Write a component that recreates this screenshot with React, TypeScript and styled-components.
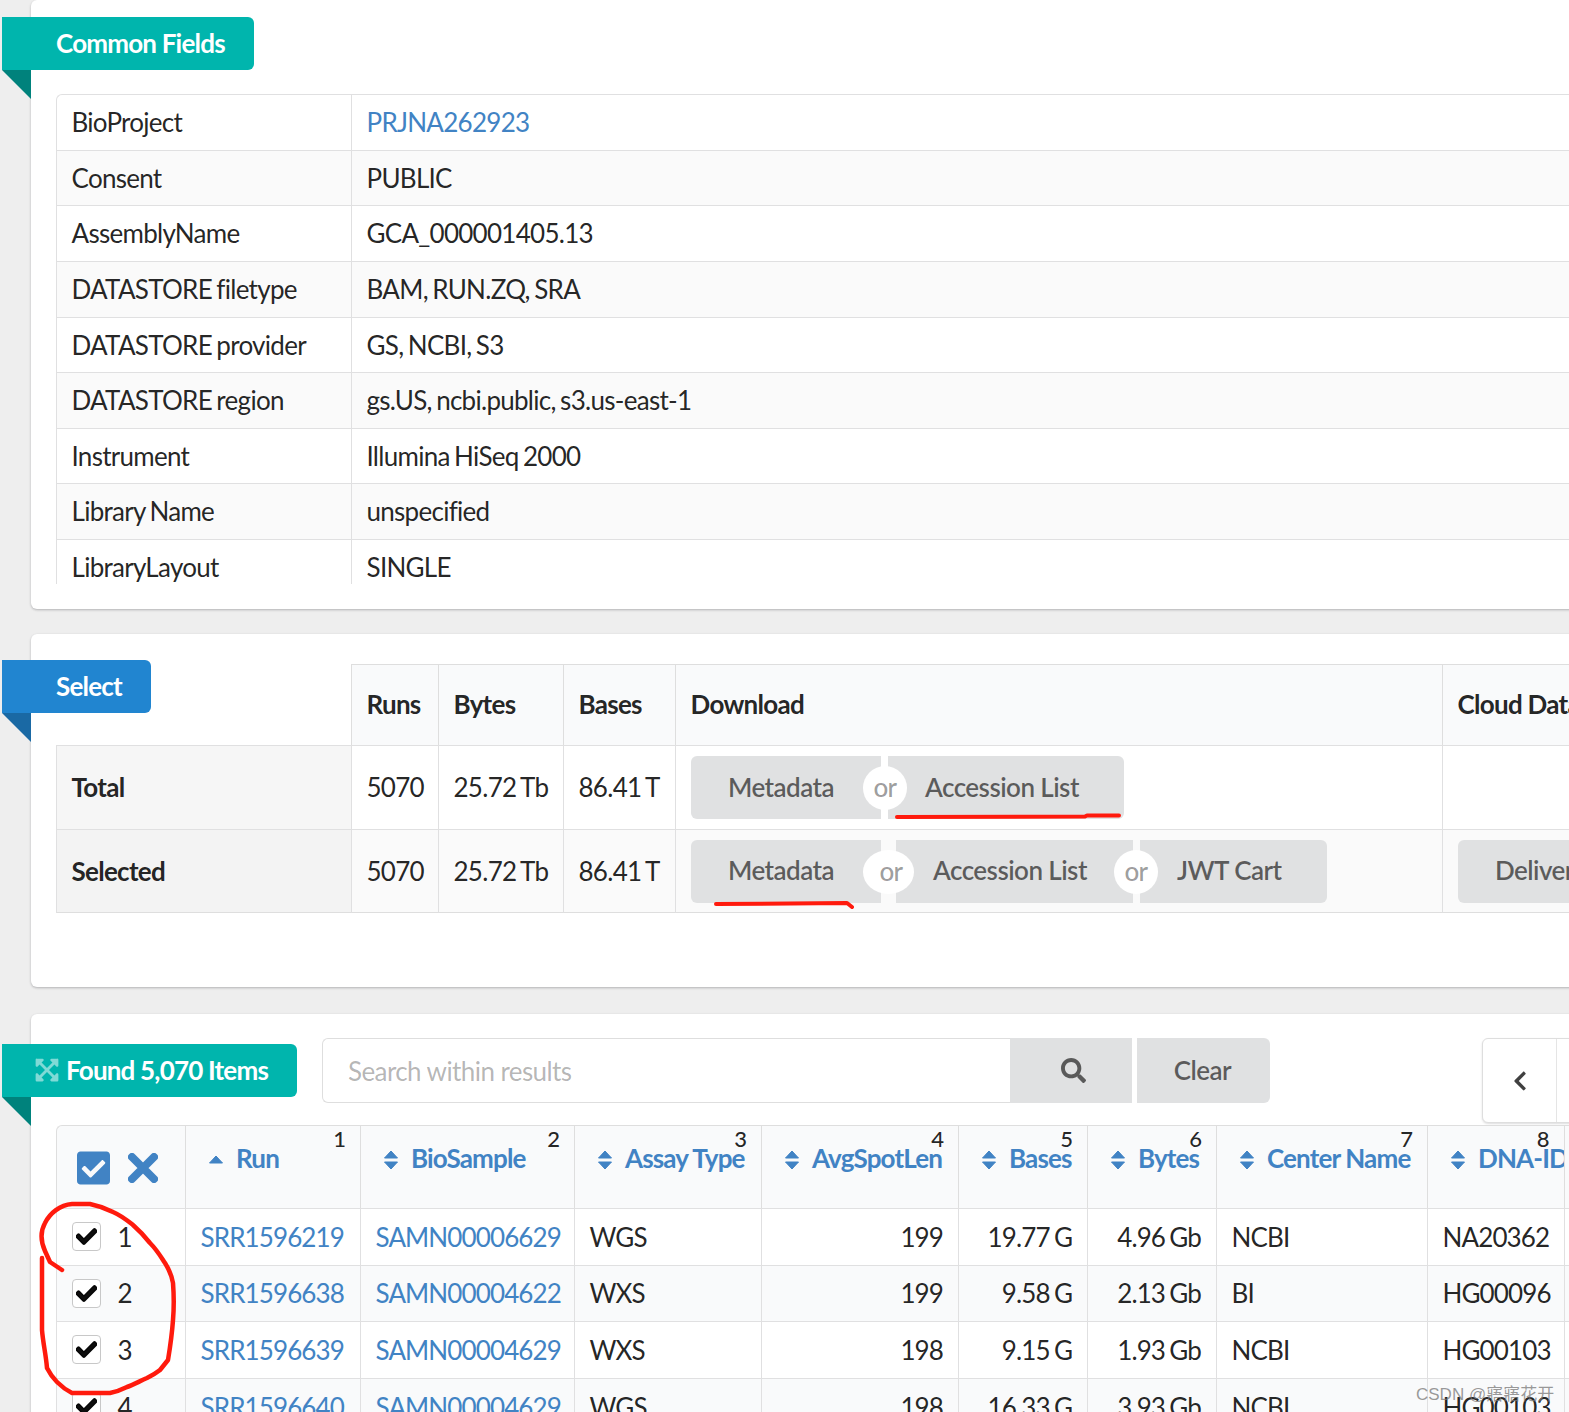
import React from "react";
import styled, { createGlobalStyle } from "styled-components";
import { FaCheck, FaCheckSquare, FaChevronLeft, FaExpandArrowsAlt, FaSearch } from "react-icons/fa";

const Global = createGlobalStyle`
  html, body { margin: 0; padding: 0; overflow: hidden; background: #eeeeee; }
  * { box-sizing: border-box; }
`;

const Page = styled.div`
  position: relative;
  width: 1569px;
  height: 1412px;
  overflow: hidden;
  padding-left: 31px;
  background: #eeeeee;
  font-family: Lato, "Noto Sans CJK SC", sans-serif;
  font-size: 26px;
  letter-spacing: -0.72px;
  word-spacing: -1.5px;
  color: rgba(0, 0, 0, 0.87);
`;

const Card = styled.section<{ $height: number; $top: number; $gap: number }>`
  position: relative;
  width: 1700px;
  height: ${(p) => p.$height}px;
  margin-bottom: ${(p) => p.$gap}px;
  padding: ${(p) => p.$top}px 0 0 25px;
  background: #fff;
  border-radius: 6px;
  box-shadow: 0 1px 2px 0 rgba(34, 36, 38, 0.15), 0 1px 3px 0 rgba(34, 36, 38, 0.15);
`;

const Ribbon = styled.div<{ $bg: string; $fold: string; $top: number; $pad?: number }>`
  position: absolute;
  z-index: 2;
  left: -29px;
  top: ${(p) => p.$top}px;
  height: 53px;
  display: flex;
  align-items: center;
  gap: 6px;
  padding: 0 29px 2px ${(p) => p.$pad ?? 54}px;
  background: ${(p) => p.$bg};
  color: #fff;
  font-weight: 700;
  letter-spacing: -0.8px;
  word-spacing: 0;
  border-radius: 0 6px 6px 0;
  &::after {
    content: "";
    position: absolute;
    left: 0;
    top: 53px;
    border-style: solid;
    border-width: 0 29px 29px 0;
    border-color: transparent ${(p) => p.$fold} transparent transparent;
  }
  svg { color: rgba(255, 255, 255, 0.5); font-size: 26px; }
`;

const ClipBox = styled.div`
  height: 490px;
  overflow: hidden;
`;

const Table = styled.table`
  width: 1644px;
  table-layout: fixed;
  border-collapse: separate;
  border-spacing: 0;
`;

const Row = styled.tr<{ $h: number }>`
  height: ${(p) => p.$h}px;
`;

const Cell = styled.td<{ $bg?: string; $right?: boolean; $bold?: boolean }>`
  padding: 0 15px 1px 14.5px;
  border-top: 1px solid #e0e0e1;
  border-left: 1px solid #e0e0e1;
  background: ${(p) => p.$bg ?? "transparent"};
  text-align: ${(p) => (p.$right ? "right" : "left")};
  font-weight: ${(p) => (p.$bold ? 700 : 400)};
  white-space: nowrap;
  overflow: hidden;
`;

const FieldTable = styled(Table)`
  tr:first-child td:first-child { border-top-left-radius: 6px; }
`;

const RunTable = styled(Table)`
  margin-top: 2px;
  td { letter-spacing: -0.88px; }
`;

const HeadCell = styled.th<{ $empty?: boolean }>`
  padding: 0 15px 2px 14.5px;
  text-align: left;
  font-weight: 700;
  word-spacing: 0;
  white-space: nowrap;
  overflow: hidden;
  ${(p) =>
    p.$empty
      ? ""
      : `background: #f9fafb; border-top: 1px solid #dedede; border-left: 1px solid #dedede;`}
`;

const SelectBottom = styled(Table)`
  tr:last-child td { border-bottom: 1px solid #dedede; }
`;

const BtnRow = styled.div`
  display: flex;
  gap: 7px;
  margin: 1px 0 0 0.5px;
`;

const Btn = styled.div<{ $w: number; $gapL?: number; $l?: boolean; $r?: boolean }>`
  position: relative;
  width: ${(p) => p.$w}px;
  height: 63px;
  margin-left: ${(p) => p.$gapL ?? 0}px;
  padding: 0 0 2px 37px;
  display: flex;
  align-items: center;
  background: #e0e1e2;
  color: rgba(0, 0, 0, 0.6);
  font-weight: 600;
  letter-spacing: -0.55px;
  word-spacing: 0;
  border-radius: ${(p) => (p.$l ? "6px" : "0")} ${(p) => (p.$r ? "6px" : "0")} ${(p) => (p.$r ? "6px" : "0")} ${(p) => (p.$l ? "6px" : "0")};
`;

const Or = styled.span<{ $w: number; $left?: number; $shift?: number }>`
  position: absolute;
  z-index: 1;
  left: ${(p) => p.$left ?? 172}px;
  top: 10px;
  width: ${(p) => p.$w}px;
  height: 44px;
  display: flex;
  align-items: center;
  justify-content: center;
  padding: 0 0 2px ${(p) => p.$shift ?? 0}px;
  background: #fff;
  border-radius: 50%;
  font-weight: 500;
  color: rgba(0, 0, 0, 0.4);
`;

const Toolbar = styled.div`
  display: flex;
  align-items: flex-start;
  height: 85px;
  margin-left: 266px;
`;

const Input = styled.div`
  width: 688px;
  height: 65px;
  display: flex;
  align-items: center;
  padding-left: 25px;
  border: 1px solid #dedede;
  border-right: 0;
  border-radius: 6px 0 0 6px;
  color: rgba(0, 0, 0, 0.3);
  letter-spacing: -0.58px;
  word-spacing: 0;
`;

const SearchBtn = styled.div`
  width: 122px;
  height: 65px;
  padding-left: 4px;
  display: flex;
  align-items: center;
  justify-content: center;
  background: #e0e1e2;
  color: rgba(0, 0, 0, 0.6);
  font-size: 25px;
`;

const ClearBtn = styled.div`
  width: 133px;
  height: 65px;
  margin-left: 5px;
  padding: 0 2px 2px 0;
  display: flex;
  align-items: center;
  justify-content: center;
  background: #e0e1e2;
  color: rgba(0, 0, 0, 0.6);
  font-weight: 600;
  letter-spacing: -0.55px;
  border-radius: 0 6px 6px 0;
`;

const Pager = styled.div`
  display: flex;
  height: 85px;
  margin-left: 212px;
  width: 200px;
  background: #fff;
  border: 1px solid #dedede;
  border-radius: 6px;
  box-shadow: 0 1px 2px 0 rgba(34, 36, 38, 0.15);
`;

const PagerCell = styled.div`
  width: 74px;
  display: flex;
  align-items: center;
  justify-content: center;
  border-right: 1px solid #e5e5e5;
  font-size: 22px;
  color: rgba(0, 0, 0, 0.75);
`;

const SortHead = styled.th`
  position: relative;
  padding: 16px 0 0 23px;
  vertical-align: top;
  background: #f9fafb;
  border-top: 1px solid #dedede;
  border-left: 1px solid #dedede;
  text-align: left;
  font-weight: 700;
  letter-spacing: -0.85px;
  word-spacing: 0;
  white-space: nowrap;
  color: #4183c4;
`;

const SortGlyph = styled.svg`
  width: 14px;
  height: 20px;
  margin-right: 13px;
  vertical-align: -2px;
  fill: #4183c4;
  stroke: #4183c4;
  stroke-width: 1;
  stroke-linejoin: round;
`;

const Badge = styled.span`
  position: absolute;
  top: -1px;
  right: 14px;
  font-size: 22px;
  font-weight: 500;
  letter-spacing: 0;
  color: rgba(0, 0, 0, 0.87);
`;

const CheckHead = styled.th`
  padding: 0 0 0 20px;
  background: #f9fafb;
  border-top: 1px solid #dedede;
  border-left: 1px solid #dedede;
  border-top-left-radius: 6px;
  color: #4183c4;
  text-align: left;
`;

const HeadIcons = styled.div`
  display: flex;
  align-items: center;
  gap: 18px;
  padding-top: 2px;
  > svg:first-child { font-size: 38px; width: 33px; }
`;

const CrossIcon = styled.svg`
  width: 30px;
  height: 30px;
  stroke: #4183c4;
  stroke-width: 8;
  stroke-linecap: round;
  fill: none;
`;

const RowCheck = styled.div`
  display: flex;
  align-items: center;
  gap: 16.5px;
  margin-left: 0.5px;
`;

const Box = styled.span`
  width: 29px;
  height: 29px;
  display: flex;
  align-items: center;
  justify-content: center;
  background: #fff;
  border: 1px solid #c8c8c8;
  border-radius: 4px;
  font-size: 21px;
  color: rgba(0, 0, 0, 0.95);
  svg { stroke: currentColor; stroke-width: 30; }
`;

const A = styled.a`
  color: #4183c4;
`;

const Ink = styled.svg`
  position: absolute;
  z-index: 5;
  left: 0;
  top: 0;
  pointer-events: none;
`;

const Watermark = styled.span`
  position: absolute;
  z-index: 6;
  left: 1416px;
  top: 1380px;
  font-family: "Liberation Sans", "Noto Sans CJK SC", sans-serif;
  font-size: 17px;
  letter-spacing: 0;
  word-spacing: 0;
  color: rgba(120, 120, 120, 0.75);
`;

const fields: [string, string][] = [
  ["BioProject", "PRJNA262923"],
  ["Consent", "PUBLIC"],
  ["AssemblyName", "GCA_000001405.13"],
  ["DATASTORE filetype", "BAM, RUN.ZQ, SRA"],
  ["DATASTORE provider", "GS, NCBI, S3"],
  ["DATASTORE region", "gs.US, ncbi.public, s3.us-east-1"],
  ["Instrument", "Illumina HiSeq 2000"],
  ["Library Name", "unspecified"],
  ["LibraryLayout", "SINGLE"],
];
const fieldHeights = [56, 55, 56, 56, 55, 56, 55, 56, 56];

const heads = ["Run", "BioSample", "Assay Type", "AvgSpotLen", "Bases", "Bytes", "Center Name", "DNA-ID"];
const runCols = [129, 175, 214, 187, 197, 129, 129, 211];
const rows = [
  ["SRR1596219", "SAMN00006629", "WGS", "199", "19.77 G", "4.96 Gb", "NCBI", "NA20362"],
  ["SRR1596638", "SAMN00004622", "WXS", "199", "9.58 G", "2.13 Gb", "BI", "HG00096"],
  ["SRR1596639", "SAMN00004629", "WXS", "198", "9.15 G", "1.93 Gb", "NCBI", "HG00103"],
  ["SRR1596640", "SAMN00004629", "WGS", "198", "16.33 G", "3.93 Gb", "NCBI", "HG00103"],
];
const rowHeights = [57, 56, 57, 57];

function SortIcon({ up }: { up: boolean }) {
  return (
    <SortGlyph viewBox="0 0 14 20">
      {up ? <path d="M7 6 L13.5 13 H0.5 Z" /> : <path d="M7 1 L13.5 8 H0.5 Z M0.5 12 H13.5 L7 19 Z" />}
    </SortGlyph>
  );
}

export default function App() {
  return (
    <Page>
      <Global />
      <Card $height={609} $top={94} $gap={25}>
        <Ribbon $bg="#00b5ad" $fold="#00827c" $top={17}>Common Fields</Ribbon>
        <ClipBox>
          <FieldTable>
            <colgroup><col width={295} /><col /></colgroup>
            <tbody>
              {fields.map(([k, v], i) => (
                <Row key={k} $h={fieldHeights[i]}>
                  <Cell $bg={i % 2 ? "#fafafa" : undefined}>{k}</Cell>
                  <Cell $bg={i % 2 ? "#fafafa" : undefined}>{i === 0 ? <A>{v}</A> : v}</Cell>
                </Row>
              ))}
            </tbody>
          </FieldTable>
        </ClipBox>
      </Card>

      <Card $height={353} $top={30} $gap={27}>
        <Ribbon $bg="#2185d0" $fold="#1a69a4" $top={26}>Select</Ribbon>
        <SelectBottom>
          <colgroup>
            <col width={295} /><col width={87} /><col width={125} /><col width={112} /><col width={767} /><col />
          </colgroup>
          <thead>
            <Row $h={81}>
              <HeadCell $empty />
              <HeadCell>Runs</HeadCell>
              <HeadCell>Bytes</HeadCell>
              <HeadCell>Bases</HeadCell>
              <HeadCell>Download</HeadCell>
              <HeadCell>Cloud Data Delivery</HeadCell>
            </Row>
          </thead>
          <tbody>
            <Row $h={84}>
              <Cell $bg="#f6f6f6" $bold>Total</Cell>
              <Cell>5070</Cell>
              <Cell>25.72 Tb</Cell>
              <Cell>86.41 T</Cell>
              <Cell>
                <BtnRow>
                  <Btn $w={190} $l>Metadata<Or $w={44}>or</Or></Btn>
                  <Btn $w={236} $r>Accession List</Btn>
                </BtnRow>
              </Cell>
              <Cell />
            </Row>
            <Row $h={84}>
              <Cell $bg="#f3f3f3" $bold>Selected</Cell>
              <Cell $bg="#fafafa">5070</Cell>
              <Cell $bg="#fafafa">25.72 Tb</Cell>
              <Cell $bg="#fafafa">86.41 T</Cell>
              <Cell $bg="#fafafa">
                <BtnRow>
                  <Btn $w={190} $l>Metadata<Or $w={51} $shift={5}>or</Or></Btn>
                  <Btn $w={237} $gapL={8}>Accession List<Or $w={44} $left={218}>or</Or></Btn>
                  <Btn $w={187} $r>JWT Cart</Btn>
                </BtnRow>
              </Cell>
              <Cell $bg="#fafafa"><BtnRow><Btn $w={200} $l>Delivery</Btn></BtnRow></Cell>
            </Row>
          </tbody>
        </SelectBottom>
      </Card>

      <Card $height={500} $top={24} $gap={0}>
        <Ribbon $bg="#00b5ad" $fold="#00827c" $top={30} $pad={32}><FaExpandArrowsAlt />Found 5,070 Items</Ribbon>
        <Toolbar>
          <Input>Search within results</Input>
          <SearchBtn><FaSearch /></SearchBtn>
          <ClearBtn>Clear</ClearBtn>
          <Pager>
            <PagerCell><FaChevronLeft /></PagerCell>
          </Pager>
        </Toolbar>
        <RunTable>
          <colgroup>
            {runCols.map((w, i) => <col key={i} width={w} />)}
            <col />
          </colgroup>
          <thead>
            <Row $h={83}>
              <CheckHead>
                <HeadIcons>
                  <FaCheckSquare />
                  <CrossIcon viewBox="0 0 30 30"><path d="M4 4 L26 26 M26 4 L4 26" /></CrossIcon>
                </HeadIcons>
              </CheckHead>
              {heads.map((h, i) => (
                <SortHead key={h}>
                  <SortIcon up={i === 0} />
                  {h}
                  <Badge>{i + 1}</Badge>
                </SortHead>
              ))}
              <SortHead />
            </Row>
          </thead>
          <tbody>
            {rows.map((r, i) => {
              const bg = i % 2 ? "#f9fafb" : undefined;
              return (
                <Row key={i} $h={rowHeights[i]}>
                  <Cell $bg={bg}>
                    <RowCheck><Box><FaCheck /></Box>{i + 1}</RowCheck>
                  </Cell>
                  <Cell $bg={bg}><A>{r[0]}</A></Cell>
                  <Cell $bg={bg}><A>{r[1]}</A></Cell>
                  <Cell $bg={bg}>{r[2]}</Cell>
                  <Cell $bg={bg} $right>{r[3]}</Cell>
                  <Cell $bg={bg} $right>{r[4]}</Cell>
                  <Cell $bg={bg} $right>{r[5]}</Cell>
                  <Cell $bg={bg}>{r[6]}</Cell>
                  <Cell $bg={bg}>{r[7]}</Cell>
                  <Cell $bg={bg} />
                </Row>
              );
            })}
          </tbody>
        </RunTable>
      </Card>

      <Ink width={1569} height={1412} viewBox="0 0 1569 1412" fill="none" stroke="#ff1a0d" strokeLinecap="round" strokeLinejoin="round">
        <path strokeWidth={4.5} d="M62 1270 L50 1262 L45 1251 C41 1242 40 1232 45 1223 C50 1213 60 1205 72 1204 L90 1204 C100 1206 107 1209 113 1212 C122 1216 128 1221 133 1225 C141 1232 146 1238 150 1243 C157 1250 161 1257 165 1263 C170 1271 172 1277 173 1283 C174 1296 174 1308 173 1320 C172 1334 170 1348 168 1360 L160 1370 C155 1374 151 1376 147 1378 C140 1381 133 1385 127 1387 C121 1390 115 1392 110 1393 L72 1393 C66 1390 61 1386 57 1382 C52 1377 49 1372 47 1368 C46 1355 43 1343 42 1330 L42 1258" />
        <path strokeWidth={4} d="M897 817 L1085 816.5 L1087 815.5 L1119 815.5" />
        <path strokeWidth={4} d="M716 904 L847 903 L852 907" />
      </Ink>
      <Watermark>CSDN @寤寤花开</Watermark>
    </Page>
  );
}
